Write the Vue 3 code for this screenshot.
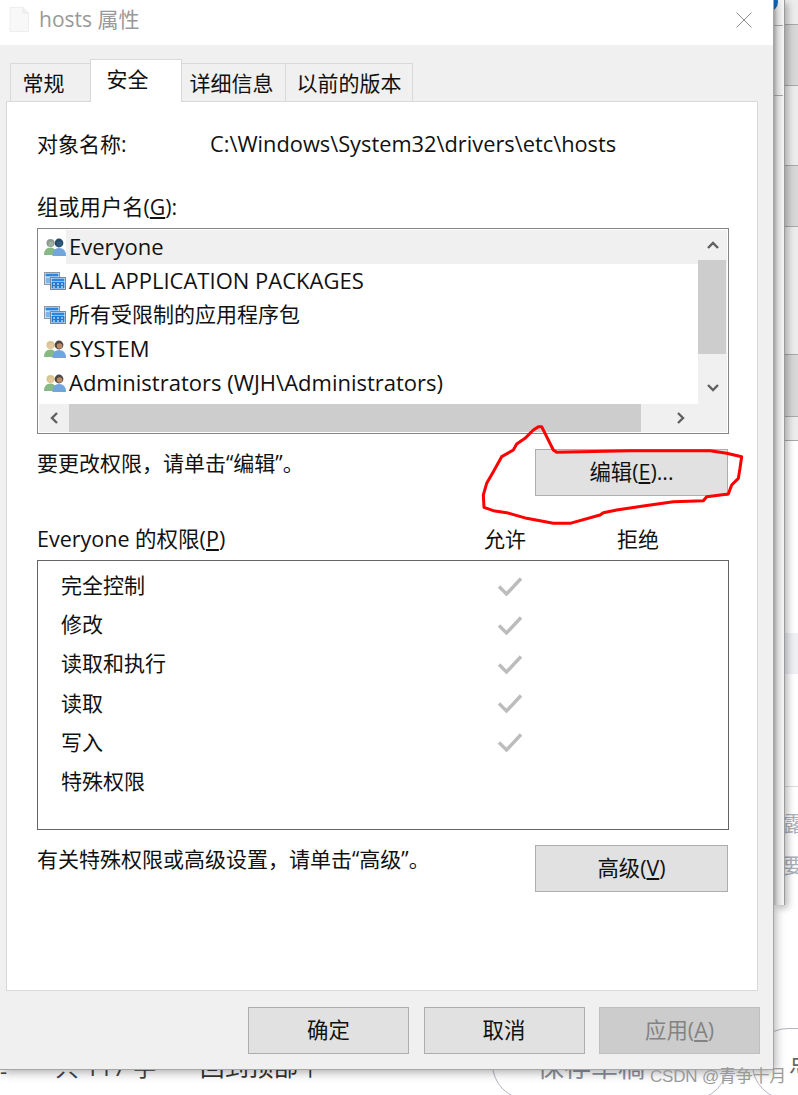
<script setup>
const users = [
  { kind: 'everyone', text: 'Everyone', sel: true },
  { kind: 'app', text: 'ALL APPLICATION PACKAGES' },
  { kind: 'app', text: '所有受限制的应用程序包', cjk: true },
  { kind: 'user', text: 'SYSTEM' },
  { kind: 'user', text: 'Administrators (WJH\\Administrators)' },
]
const perms = [
  { name: '完全控制', on: true },
  { name: '修改', on: true },
  { name: '读取和执行', on: true },
  { name: '读取', on: true },
  { name: '写入', on: true },
  { name: '特殊权限', on: false },
]
const tabs = [
  { name: '常规', w: 81, pr: 14 },
  { name: '安全', w: 92, pr: 17, active: true },
  { name: '详细信息', w: 105, pr: 4 },
  { name: '以前的版本', w: 128, pr: 0 },
]
const bands = [
  { h: 25, c: 'light' }, { h: 61, c: 'dark' }, { h: 80, c: 'light' }, { h: 61, c: 'dark' },
  { h: 128, c: 'light' }, { h: 62, c: 'dark' }, { h: 24, c: 'light' },
]
const redPath = 'M205 620 L190 630 L165 655 L140 672 L130 690 L95 710 L70 755 L50 790 L40 825 L42 862 L70 872 L110 878 L170 895 L250 910 L300 910 L390 885 L400 878 L440 870 L520 858 L610 845 L700 842 L710 830 L775 822 L785 795 L805 775 L810 745 L815 710 L770 700 L720 692 L480 692 L260 697 L250 690 L215 620 Z'
</script>

<template>
  <div class="desk">
    <div class="bands">
      <div v-for="(b, i) in bands" :key="i" :class="['band', b.c]" :style="{ height: b.h + 'px' }"></div>
    </div>
    <div class="side-row side-tint"></div>
    <div class="side-row side-line"></div>
    <span class="side-text t1">露</span>
    <span class="side-text t2">要</span>
    <div class="strip"><i class="l1"></i><i class="l2"></i></div>
    <div class="blue-dot"></div>

    <span class="under u-dash">-</span>
    <span class="under u-count">共 117 字</span>
    <span class="under u-top">回到顶部↑</span>
    <div class="pill p1"></div>
    <div class="pill p2"></div>
    <span class="under u-save">保存草稿</span>
    <span class="under u-frag">点</span>

    <section class="dialog">
      <header class="titlebar">
        <svg class="file-icon" viewBox="0 0 20 25" width="20" height="25">
          <path d="M1 .5H14L19.5 6V24.5H1Z" fill="#f8f8f8" stroke="#eeeeee" />
          <path d="M14 .5V6H19.5" fill="#efefef" stroke="#eaeaea" />
        </svg>
        <span class="title">hosts 属性</span>
        <svg class="close" viewBox="0 0 16 16" width="16" height="16">
          <path d="M.5 .5L15.5 15.5M15.5 .5L.5 15.5" stroke="#8c8c8c" stroke-width="1" fill="none" />
        </svg>
      </header>

      <div class="body">
        <nav class="tabs">
          <div v-for="t in tabs" :key="t.name" :class="['tab', { active: t.active }]" :style="{ width: t.w + 'px', paddingRight: t.pr + 'px' }">{{ t.name }}</div>
        </nav>

        <div class="panel">
          <div class="line object"><span class="obj-label">对象名称:</span><span class="latin">C:\Windows\System32\drivers\etc\hosts</span></div>
          <div class="line group">组或用户名(<u>G</u>):</div>

          <div class="listbox">
            <div class="list">
              <div v-for="u in users" :key="u.text" class="urow">
                <svg v-if="u.kind !== 'app'" class="uicon" viewBox="0 0 22 18" width="22" height="18">
                  <circle cx="6.5" cy="5" r="4" :fill="u.kind === 'everyone' ? '#8a9a8f' : '#d8c48e'" />
                  <circle cx="7" cy="6" r="2.6" :fill="u.kind === 'everyone' ? '#9db0a2' : '#e6c9a0'" />
                  <path d="M0 17Q0 9.5 6.5 9.5Q10 9.5 11 12V17Z" fill="#86b984" />
                  <circle cx="15" cy="5" r="4.4" :fill="u.kind === 'everyone' ? '#244a68' : '#4a4744'" />
                  <circle cx="15.6" cy="6" r="2.8" :fill="u.kind === 'everyone' ? '#2f5a7a' : '#b98a63'" />
                  <path d="M8.5 18Q8.5 10 15 10Q22 10 22 18Z" fill="#72a5dc" />
                </svg>
                <svg v-else class="uicon" viewBox="0 0 22 18" width="22" height="18">
                  <rect x=".5" y=".5" width="15" height="12" fill="#fff" stroke="#8b97a5" />
                  <rect x="1.5" y="1.5" width="13" height="3" fill="#2b86e0" />
                  <rect x="1.5" y="5.5" width="5" height="6" fill="#7db5ec" />
                  <rect x="6.5" y="5.5" width="15" height="12" fill="#fff" stroke="#7c8794" />
                  <rect x="7.5" y="6.5" width="13" height="3" fill="#2b86e0" />
                  <rect x="7.5" y="10" width="13" height="6.5" fill="#1f7ad6" />
                  <path d="M9 12h2M13 12h2M17 12h2M9 15h2M13 15h2M17 15h2" stroke="#fff" stroke-width="1" />
                </svg>
                <span :class="['uname', { sel: u.sel, cjk: u.cjk }]">{{ u.text }}</span>
              </div>
            </div>
            <div class="vscroll">
              <div class="arrow-v">
                <svg width="14" height="10" viewBox="0 0 14 10"><path d="M2 8L7 3L12 8" class="chev" /></svg>
              </div>
              <div class="vthumb"></div>
              <div class="arrow-v bottom">
                <svg width="14" height="10" viewBox="0 0 14 10"><path d="M2 2L7 7L12 2" class="chev" /></svg>
              </div>
            </div>
            <div class="hscroll">
              <div class="arrow-h">
                <svg width="10" height="14" viewBox="0 0 10 14"><path d="M8 2L3 7L8 12" class="chev" /></svg>
              </div>
              <div class="hthumb"></div>
              <div class="arrow-h right">
                <svg width="10" height="14" viewBox="0 0 10 14"><path d="M2 2L7 7L2 12" class="chev" /></svg>
              </div>
            </div>
          </div>

          <div class="action-row first">
            <span class="line">要更改权限，请单击“编辑”。</span>
            <button class="btn wide" type="button">编辑(<u>E</u>)...</button>
          </div>

          <div class="perm-head">
            <span class="ph-name"><span class="ph-text">Everyone 的权限(<u>P</u>)</span></span>
            <span class="ph-allow">允许</span>
            <span class="ph-deny">拒绝</span>
          </div>

          <div class="permbox">
            <div v-for="p in perms" :key="p.name" class="prow">
              <span class="pname">{{ p.name }}</span>
              <svg v-if="p.on" width="26" height="20" viewBox="0 0 26 20" class="pcheck">
                <path d="M2 10.5L9.5 18L24 2.5" fill="none" stroke="#bcbcbc" stroke-width="3.4" />
              </svg>
            </div>
          </div>

          <div class="action-row second">
            <span class="line">有关特殊权限或高级设置，请单击“高级”。</span>
            <button class="btn wide" type="button">高级(<u>V</u>)</button>
          </div>
        </div>

        <footer class="footer">
          <button class="btn foot" type="button">确定</button>
          <button class="btn foot" type="button">取消</button>
          <button class="btn foot disabled" type="button">应用(<u>A</u>)</button>
        </footer>
      </div>
    </section>

    <svg class="scribble" viewBox="0 0 984 960" width="328" height="320">
      <path :d="redPath" fill="none" stroke="#ff0000" stroke-width="9" stroke-linejoin="round" />
    </svg>

    <span class="mark">CSDN @青争十月</span>
  </div>
</template>

<style>
html, body { margin: 0; background: #fff; }
</style>

<style scoped>
.desk {
  position: relative;
  width: 798px;
  height: 1095px;
  overflow: hidden;
  background: #fff;
  font-family: "Open Sans", "Noto Sans CJK SC", sans-serif;
  color: #111;
}
.bands { position: absolute; left: 784px; top: 0; width: 14px; display: flex; flex-direction: column; }
.band { box-sizing: border-box; border-bottom: 1px solid #a9a9a9; }
.band.light { background: #ececec; }
.band.dark { background: #d8d8d8; }
.side-row { position: absolute; left: 784px; width: 14px; }
.side-tint { top: 633px; height: 41px; background: #eef0f4; }
.side-line { top: 786px; height: 1px; background: #d9dbe0; }
.side-text { position: absolute; left: 783px; font-size: 21px; line-height: 24px; color: #aab0ba; }
.t1 { top: 811px; }
.t2 { top: 853px; }
.strip {
  position: absolute; left: 773px; top: 0; width: 11px; height: 905px;
  background: linear-gradient(90deg, #c4c4c4 0, #ececec 40%, #f9f9f9 100%);
  box-shadow: 1px 0 0 #9c9c9c, 4px 3px 7px rgba(0, 0, 0, .28);
}
.strip i { position: absolute; left: 0; right: 1px; height: 1px; background: #a8a8a8; }
.strip .l1 { top: 25px; }
.strip .l2 { top: 95px; }
.blue-dot {
  position: absolute; left: 758px; top: -8px; width: 20px; height: 20px; border-radius: 50%;
  background: #1565b4;
}
.under { position: absolute; white-space: nowrap; line-height: 24px; }
.u-dash { left: 0; top: 1058px; font-size: 22px; color: #444; }
.u-count { left: 55px; top: 1055px; font-size: 24px; color: #444; }
.u-top { left: 200px; top: 1055px; font-size: 24.5px; color: #333; }
.u-save { left: 537px; top: 1055px; font-size: 27px; color: #8c91a0; }
.u-frag { left: 789px; top: 1050px; font-size: 24px; color: #666; }
.pill { position: absolute; box-sizing: border-box; top: 1028px; height: 72px; border: 1px solid #b4b4c2; border-radius: 36px; }
.p1 { left: 492px; width: 236px; }
.p2 { left: 752px; width: 120px; }

.dialog {
  position: absolute; left: 0; top: 0; width: 773px; height: 1069px;
  display: flex; flex-direction: column;
  background: #f0f0f0;
  box-shadow: 0 0 0 1px #a6a6a6, 2px 3px 10px rgba(0, 0, 0, .35);
}
.titlebar { position: relative; height: 45px; flex: none; background: #fff; display: flex; align-items: center; padding-left: 9px; }
.file-icon { margin-top: -7px; }
.title { margin-left: 10px; margin-top: -8px; font-size: 21px; color: #999; line-height: 28px; }
.close { position: absolute; left: 736px; top: 12px; }
.body { flex: 1; display: flex; flex-direction: column; }
.tabs { display: flex; align-items: flex-end; height: 42px; margin: 14px 0 0 10px; position: relative; z-index: 1; }
.tab {
  box-sizing: border-box; height: 38px; background: #f0f0f0;
  border: 1px solid #d9d9d9; border-bottom: none; margin-right: -1px;
  font-size: 21px; line-height: 39px; text-align: center; flex: none;
}
.tab.active { height: 43px; margin-bottom: -1px; background: #fff; line-height: 39px; position: relative; z-index: 2; }
.panel {
  box-sizing: border-box; width: 752px; height: 890px; margin-left: 6px;
  background: #fff; border: 1px solid #d9d9d9; padding: 28px 0 0 30px;
}
.line { font-size: 21px; line-height: 28px; white-space: nowrap; }
.object { display: flex; }
.obj-label { width: 173px; }
.latin { font-size: 21.8px; }
.group { margin-top: 35px; font-size: 21.3px; }
u { text-underline-offset: 2px; }

.listbox {
  box-sizing: border-box; width: 692px; height: 206px; margin-top: 7px; padding: 1px;
  border: 1px solid #858585; display: grid;
  grid-template-columns: 659px 29px; grid-template-rows: 174px 28px;
}
.list { background: #fff; overflow: hidden; min-width: 0; }
.urow { display: flex; align-items: center; height: 34px; padding-left: 5px; font-size: 22px; white-space: nowrap; }
.uicon { flex: none; }
.uname { flex: 1; line-height: 32px; padding: 0 0 2px 3px; }
.uname.cjk { font-size: 21px; }
.uname.sel { background: #f0f0f0; }
.vscroll { background: #f0f0f0; display: flex; flex-direction: column; }
.arrow-v { height: 30px; flex: none; display: flex; align-items: center; justify-content: center; }
.arrow-v.bottom { margin-top: auto; height: 32px; }
.vthumb { width: 28px; height: 94px; flex: none; background: #cdcdcd; }
.hscroll { grid-column: 1 / 3; background: #f0f0f0; display: flex; }
.arrow-h { width: 30px; flex: none; display: flex; align-items: center; justify-content: center; }
.arrow-h.right { margin-left: auto; width: 86px; box-sizing: border-box; padding-right: 6px; }
.hthumb { width: 572px; flex: none; background: #cdcdcd; }
.chev { fill: none; stroke: #606060; stroke-width: 2.4; }

.action-row { display: flex; justify-content: space-between; align-items: flex-start; width: 691px; margin-top: 15px; }
.btn {
  box-sizing: border-box; padding: 0 0 2px; height: 47px; background: #e1e1e1; border: 1px solid #adadad;
  font-family: inherit; font-size: 21.4px; color: #111; line-height: 43px; text-align: center;
}
.btn.wide { width: 193px; }
.perm-head { display: flex; height: 28px; margin-top: 30px; font-size: 21px; line-height: 26px; white-space: nowrap; }
.ph-name { width: 447px; }
.ph-text { font-size: 21.5px; }
.ph-allow { width: 133px; }
.permbox {
  box-sizing: border-box; width: 692px; height: 270px; margin-top: 6px; padding: 5px 0 0 23px;
  border: 1px solid #646464;
}
.prow { display: flex; align-items: center; height: 39.2px; font-size: 21px; white-space: nowrap; }
.pname { width: 436px; padding-bottom: 3px; }
.second { margin-top: 15px; }
.footer { display: flex; justify-content: flex-end; gap: 14.5px; margin-top: 16px; padding-right: 13px; }
.btn.foot { width: 161px; }
.btn.disabled { background: #cccccc; border-color: #bfbfbf; color: #838383; }

.scribble { position: absolute; left: 470px; top: 220px; pointer-events: none; }
.mark {
  position: absolute; left: 650px; top: 1066px; font-size: 17px; line-height: 22px; white-space: nowrap;
  color: #9a9a9a; font-family: "Liberation Sans", "Noto Sans CJK SC", sans-serif;
  letter-spacing: -.2px;
}
</style>
